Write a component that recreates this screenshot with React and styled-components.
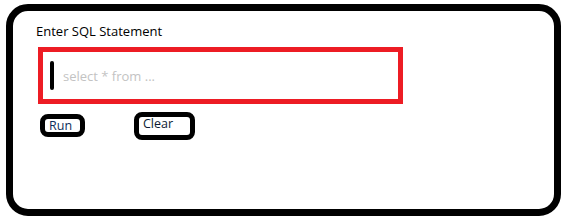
import React from 'react';
import styled, { createGlobalStyle } from 'styled-components';

const GlobalStyle = createGlobalStyle`
  html, body {
    margin: 0;
    padding: 0;
    background: #ffffff;
  }
  body {
    font-family: "Open Sans", "Noto Sans", sans-serif;
  }
`;

const Page = styled.div`
  width: 565px;
  height: 221px;
  padding: 4px 4px 5px 6px;
  box-sizing: border-box;
`;

const Card = styled.div`
  width: 555px;
  height: 212px;
  box-sizing: border-box;
  border: 7px solid #000000;
  border-radius: 22px;
  padding: 12px 0 0 23px;
  display: flex;
  flex-direction: column;
`;

const Label = styled.label`
  font-size: 13px;
  line-height: 17px;
  color: #000000;
`;

const QueryBox = styled.div`
  margin: 7px 0 0 2px;
  width: 365px;
  height: 57px;
  box-sizing: border-box;
  border: 5px solid #ed1c24;
  display: flex;
  align-items: center;
  padding-left: 7px;
  gap: 9px;
`;

const Caret = styled.span`
  width: 4px;
  height: 29px;
  border-radius: 2px;
  background: #000000;
`;

const Placeholder = styled.span`
  font-size: 13px;
  color: #c3c3c3;
  margin-top: 1px;
`;

const ButtonRow = styled.div`
  display: flex;
  align-items: flex-start;
  margin: 8px 0 0 4px;
  gap: 49px;
`;

const Button = styled.button`
  width: ${(p) => p.$w}px;
  height: ${(p) => p.$h}px;
  margin-top: ${(p) => p.$top}px;
  box-sizing: border-box;
  border: 5px solid #000000;
  border-radius: 8px;
  background: #ffffff;
  padding: ${(p) => p.$pad};
  font-family: "Open Sans", "Noto Sans", sans-serif;
  font-size: 12.5px;
  line-height: 13px;
  color: ${(p) => p.$color};
  text-align: left;
  display: flex;
  align-items: flex-start;
  overflow: hidden;
`;

export default function App() {
  return (
    <>
      <GlobalStyle />
      <Page>
        <Card>
          <Label>Enter SQL Statement</Label>
          <QueryBox>
            <Caret />
            <Placeholder>select * from ...</Placeholder>
          </QueryBox>
          <ButtonRow>
            <Button $w={45} $h={23} $top={2} $pad="0 0 0 4px" $color="#0d2f5c">
              Run
            </Button>
            <Button $w={61} $h={28} $top={0} $pad="0 0 0 4px" $color="#0a1a33">
              Clear
            </Button>
          </ButtonRow>
        </Card>
      </Page>
    </>
  );
}
